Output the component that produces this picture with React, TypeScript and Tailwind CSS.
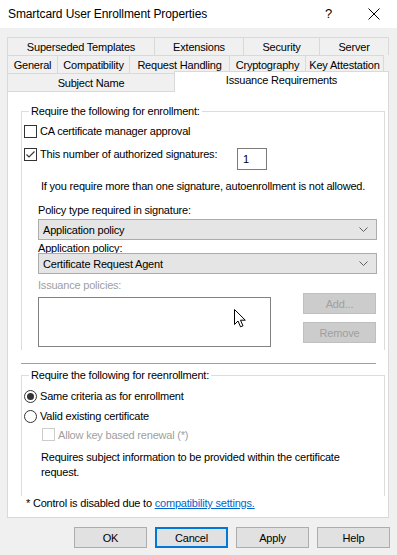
import React from 'react';

const font = "font-['Liberation_Sans',Arial,sans-serif]";

function CheckBox({ checked, disabled }: { checked?: boolean; disabled?: boolean }) {
  return (
    <span
      className={`w-[13px] h-[13px] border shrink-0 flex items-center justify-center bg-white ${
        disabled ? 'border-[#cccccc]' : 'border-[#333333]'
      }`}
    >
      {checked && (
        <svg width="11" height="11" viewBox="0 0 11 11">
          <path d="M1.5 5.5 L4 8 L9.5 2.5" fill="none" stroke="#333333" strokeWidth="1.1" />
        </svg>
      )}
    </span>
  );
}

function Radio({ checked }: { checked?: boolean }) {
  return (
    <span className="w-[13px] h-[13px] rounded-full border border-[#333333] bg-white flex items-center justify-center shrink-0">
      {checked && <span className="w-[7px] h-[7px] rounded-full bg-[#333333]" />}
    </span>
  );
}

function Chevron() {
  return (
    <svg width="9" height="5" viewBox="0 0 9 5">
      <path d="M0.5 0.5 L4.5 4.5 L8.5 0.5" fill="none" stroke="#606060" strokeWidth="1" />
    </svg>
  );
}

function Select({ value }: { value: string }) {
  return (
    <div className="w-[339px] h-[21px] border border-[#acacac] bg-[#e5e5e5] flex items-center justify-between pl-[4px] pr-[8px]">
      <span>{value}</span>
      <Chevron />
    </div>
  );
}

function Tab({ label, className }: { label: string; className: string }) {
  return (
    <div
      className={`h-[18px] flex items-center justify-center border-t border-l border-[#d9d9d9] bg-[#f0f0f0] ${className}`}
    >
      {label}
    </div>
  );
}

function Button({ label, active }: { label: string; active?: boolean }) {
  return (
    <div
      className={`w-[73px] h-[21px] flex items-center justify-center bg-[#e1e1e1] ${
        active ? 'border-2 border-[#0078d7]' : 'border border-[#adadad]'
      }`}
    >
      {label}
    </div>
  );
}

export default function App() {
  return (
    <div className={`w-[397px] h-[555px] bg-[#f0f0f0] overflow-hidden text-[11px] leading-[14px] tracking-[-0.2px] text-black ${font}`}>
      {/* Title bar */}
      <div className="h-[28px] bg-white flex items-center pl-[8px] text-[12px]">
        <span className="tracking-[-0.1px]">Smartcard User Enrollment Properties</span>
        <span className="ml-auto mr-[36px] text-[13px]">?</span>
        <svg width="12" height="12" viewBox="0 0 12 12" className="mr-[17px]">
          <path d="M0.5 0.5 L11.5 11.5 M11.5 0.5 L0.5 11.5" stroke="#000" strokeWidth="1" />
        </svg>
      </div>

      {/* Tabs */}
      <div className="pt-[9px] pl-[7px]">
        <div className="flex">
          <Tab label="Superseded Templates" className="w-[147px]" />
          <Tab label="Extensions" className="w-[89px]" />
          <Tab label="Security" className="w-[76px]" />
          <Tab label="Server" className="w-[70px] border-r" />
        </div>
        <div className="flex">
          <Tab label="General" className="w-[50px]" />
          <Tab label="Compatibility" className="w-[72px]" />
          <Tab label="Request Handling" className="w-[100px]" />
          <Tab label="Cryptography" className="w-[76px]" />
          <Tab label="Key Attestation" className="w-[79px] border-r" />
        </div>
        <div className="flex items-end h-[18px]">
          <Tab label="Subject Name" className="w-[167px]" />
          <div className="relative z-10 w-[215px] h-[21px] -mb-px pb-[5px] flex items-center justify-center bg-white border-t border-l border-r border-[#d9d9d9]">
            Issuance Requirements
          </div>
        </div>
      </div>

      {/* Panel */}
      <div className="ml-[7px] w-[382px] h-[427px] border border-[#d9d9d9] bg-white flex flex-col">
        <fieldset className="ml-[13px] mt-[12px] w-[364px] h-[246px] border border-b-0 border-[#dcdcdc]">
          <legend className="ml-[7px] px-[2px]">Require the following for enrollment:</legend>
          <div className="pl-[2px] mt-[4px] flex flex-col">
            <label className="h-[18px] flex items-center gap-[3px]">
              <CheckBox />
              <span>CA certificate manager approval</span>
            </label>
            <div className="flex items-start mt-[7px]">
              <label className="w-[213px] h-[14px] flex items-center gap-[3px]">
                <CheckBox checked />
                <span>This number of authorized signatures:</span>
              </label>
              <div className="w-[30px] h-[22px] mt-[1px] border border-[#7a7a7a] flex items-center pl-[5px]">1</div>
            </div>
            <div className="pl-[17px] mt-[9px]">
              If you require more than one signature, autoenrollment is not allowed.
            </div>
            <div className="pl-[14px] mt-[10px] flex flex-col">
              <span>Policy type required in signature:</span>
              <div className="mt-[2px]">
                <Select value="Application policy" />
              </div>
              <span className="mt-[1px]">Application policy:</span>
              <div className="mt-[-2px]">
                <Select value="Certificate Request Agent" />
              </div>
              <span className="mt-[4px] text-[#a0a0a0]">Issuance policies:</span>
              <div className="flex mt-[1px]">
                <div className="relative w-[233px] h-[50px] mt-[4px] border border-[#828282] bg-white">
                  <svg
                    width="14"
                    height="20"
                    viewBox="0 0 14 20"
                    className="absolute left-[195px] top-[11px]"
                  >
                    <path
                      d="M0.5 0.5 L0.5 15.5 L4 12 L6.5 17.8 L9 16.8 L6.5 11.2 L11.3 11.2 Z"
                      fill="#ffffff"
                      stroke="#000000"
                      strokeWidth="1"
                      strokeLinejoin="round"
                    />
                  </svg>
                </div>
                <div className="ml-[32px] flex flex-col gap-[8px]">
                  <div className="w-[73px] h-[21px] flex items-center justify-center bg-[#cccccc] border border-[#bfbfbf] text-[#a0a0a0]">
                    Add...
                  </div>
                  <div className="w-[73px] h-[21px] flex items-center justify-center bg-[#cccccc] border border-[#bfbfbf] text-[#a0a0a0]">
                    Remove
                  </div>
                </div>
              </div>
            </div>
          </div>
        </fieldset>

        <div className="ml-[13px] mt-[13px] w-[355px] h-px bg-[#a0a0a0]" />

        <fieldset className="ml-[13px] mt-[4px] w-[364px] h-[128px] border border-b-0 border-[#dcdcdc]">
          <legend className="ml-[7px] px-[2px]">Require the following for reenrollment:</legend>
          <div className="pl-[2px] mt-[4px] flex flex-col">
            <label className="h-[20px] flex items-center gap-[3px]">
              <Radio checked />
              <span>Same criteria as for enrollment</span>
            </label>
            <label className="h-[20px] flex items-center gap-[3px]">
              <Radio />
              <span>Valid existing certificate</span>
            </label>
            <label className="h-[17px] pl-[18px] flex items-center gap-[3px] text-[#a0a0a0]">
              <CheckBox disabled />
              <span>Allow key based renewal (*)</span>
            </label>
            <div className="pl-[17px] mt-[7px] leading-[15px]">
              Requires subject information to be provided within the certificate
              <br />
              request.
            </div>
          </div>
        </fieldset>

        <div className="ml-[18px]">
          * Control is disabled due to{' '}
          <span className="text-[#0066cc] underline">compatibility settings.</span>
        </div>
      </div>

      {/* Buttons */}
      <div className="flex gap-[8px] pl-[74px] mt-[9px]">
        <Button label="OK" />
        <Button label="Cancel" active />
        <Button label="Apply" />
        <Button label="Help" />
      </div>
    </div>
  );
}
